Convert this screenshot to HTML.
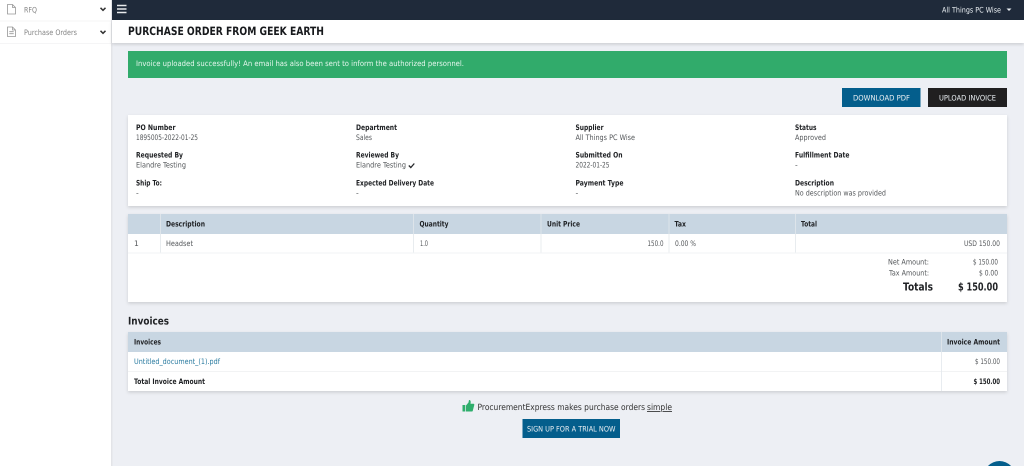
<!DOCTYPE html>
<html lang="en">
<head>
<meta charset="utf-8">
<title>Purchase Order from Geek Earth</title>
<style>
html,body{margin:0;padding:0;width:1024px;height:466px;overflow:hidden;background:#edeff4}
svg{display:block;filter:blur(.3px)}
text{font-family:"DejaVu Sans","Liberation Sans",sans-serif;font-size:7.6px;fill:#55585b;text-rendering:geometricPrecision}
.b{font-weight:700;fill:#202225}
.w{fill:#e9eef2}
</style>
</head>
<body>
<svg xmlns="http://www.w3.org/2000/svg" width="1024" height="466" viewBox="0 0 1024 466">
<defs>
<filter id="s" x="-2%" y="-10%" width="104%" height="125%"><feDropShadow dx="0" dy="1.5" stdDeviation="1.5" flood-color="#000" flood-opacity=".14"/></filter>
</defs>
<rect width="1024" height="466" fill="#edeff4"/>

<!-- Sidebar -->
<rect x="0" y="0" width="111" height="466" fill="#fff"/>
<rect x="111" y="0" width="1.500" height="466" fill="#e3e4e8"/>
<rect x="0" y="20.500" width="111" height="1" fill="#f5f5f6"/>
<rect x="0" y="43" width="111" height="1" fill="#f5f5f6"/>
<path d="M7.500 4.500h5l3 3v6.500h-8zM12.500 4.500v3h3" fill="none" stroke="#979797" stroke-width=".8"/>
<text x="24" y="12.300" textLength="13" lengthAdjust="spacingAndGlyphs" style="fill:#858585">RFQ</text>
<path d="M100.500 7.800l2.500 2.500 2.500-2.500" fill="none" stroke="#333" stroke-width="1.500"/>
<path d="M7.500 27h5l3 3v6.500h-8zM12.500 27v3h3M9.300 31.700h4.400M9.300 33.700h4.400" fill="none" stroke="#979797" stroke-width=".8"/>
<text x="24" y="35" textLength="53" lengthAdjust="spacingAndGlyphs" style="fill:#858585">Purchase Orders</text>
<path d="M100.500 30.800l2.500 2.500 2.500-2.500" fill="none" stroke="#333" stroke-width="1.500"/>

<!-- Top bar -->
<rect x="112" y="0" width="912" height="20" fill="#1f2a3a"/>
<path d="M117 5.500h9.500M117 9h9.500M117 12.500h9.500" stroke="#e8eaec" stroke-width="1.600"/>
<text class="w" x="942" y="12.300" textLength="59" lengthAdjust="spacingAndGlyphs">All Things PC Wise</text>
<path d="M1006.500 8.500h5l-2.500 2.500z" fill="#e9eef2"/>

<!-- Title bar -->
<rect x="112" y="20" width="912" height="23" fill="#fff" filter="url(#s)"/>
<text class="b" x="128" y="35" textLength="196" lengthAdjust="spacingAndGlyphs" style="font-size:11.500px;fill:#17191c">PURCHASE ORDER FROM GEEK EARTH</text>

<!-- Alert -->
<rect x="128" y="51" width="879" height="27" fill="#31ab6b"/>
<text x="136" y="66" textLength="328" lengthAdjust="spacingAndGlyphs" style="fill:#e6f6ee">Invoice uploaded successfully! An email has also been sent to inform the authorized personnel.</text>

<!-- Buttons -->
<rect x="842" y="88" width="78.500" height="19" fill="#045e8c"/>
<text class="w" x="853" y="100.300" textLength="57" lengthAdjust="spacingAndGlyphs">DOWNLOAD PDF</text>
<rect x="928" y="88" width="79" height="19" fill="#201f20"/>
<text class="w" x="939" y="100.300" textLength="57" lengthAdjust="spacingAndGlyphs">UPLOAD INVOICE</text>

<!-- Details card -->
<rect x="128" y="115" width="879" height="91" fill="#fff" filter="url(#s)"/>
<text class="b" x="136" y="130" textLength="39.500" lengthAdjust="spacingAndGlyphs">PO Number</text>
<text x="136" y="140" textLength="62" lengthAdjust="spacingAndGlyphs">1895005-2022-01-25</text>
<text class="b" x="136" y="157.700" textLength="47" lengthAdjust="spacingAndGlyphs">Requested By</text>
<text x="136" y="167.700" textLength="50" lengthAdjust="spacingAndGlyphs">Elandre Testing</text>
<text class="b" x="136" y="185.500" textLength="26" lengthAdjust="spacingAndGlyphs">Ship To:</text>
<text x="136" y="195.500">-</text>

<text class="b" x="356" y="130" textLength="41" lengthAdjust="spacingAndGlyphs">Department</text>
<text x="356" y="140" textLength="16" lengthAdjust="spacingAndGlyphs">Sales</text>
<text class="b" x="356" y="157.700" textLength="43" lengthAdjust="spacingAndGlyphs">Reviewed By</text>
<text x="356" y="167.700" textLength="50" lengthAdjust="spacingAndGlyphs">Elandre Testing</text>
<path d="M408.800 165.500l2 2 3.500-4" fill="none" stroke="#26282b" stroke-width="1.300"/>
<text class="b" x="356" y="185.500" textLength="78" lengthAdjust="spacingAndGlyphs">Expected Delivery Date</text>
<text x="356" y="195.500">-</text>

<text class="b" x="575.500" y="130" textLength="28" lengthAdjust="spacingAndGlyphs">Supplier</text>
<text x="575.500" y="140" textLength="59.500" lengthAdjust="spacingAndGlyphs">All Things PC Wise</text>
<text class="b" x="575.500" y="157.700" textLength="47" lengthAdjust="spacingAndGlyphs">Submitted On</text>
<text x="575.500" y="167.700" textLength="34" lengthAdjust="spacingAndGlyphs">2022-01-25</text>
<text class="b" x="575.500" y="185.500" textLength="48" lengthAdjust="spacingAndGlyphs">Payment Type</text>
<text x="575.500" y="195.500">-</text>

<text class="b" x="795" y="130" textLength="21.500" lengthAdjust="spacingAndGlyphs">Status</text>
<text x="795" y="140" textLength="31" lengthAdjust="spacingAndGlyphs">Approved</text>
<text class="b" x="795" y="157.700" textLength="54.500" lengthAdjust="spacingAndGlyphs">Fulfillment Date</text>
<text x="795" y="167.700">-</text>
<text class="b" x="795" y="185.500" textLength="39" lengthAdjust="spacingAndGlyphs">Description</text>
<text x="795" y="195.500" textLength="91" lengthAdjust="spacingAndGlyphs">No description was provided</text>

<!-- Line items card -->
<rect x="128" y="214" width="879" height="88" fill="#fff" filter="url(#s)"/>
<rect x="128" y="214" width="879" height="20" fill="#c8d6e2"/>
<path d="M160.500 214v39M413.500 214v39M541 214v39M669 214v39M795.500 214v39" stroke="#e3e8ec" stroke-width=".8"/>
<rect x="128" y="252.500" width="879" height="1" fill="#f2f3f4"/>
<text class="b" x="166" y="226.700" textLength="39" lengthAdjust="spacingAndGlyphs">Description</text>
<text class="b" x="419.500" y="226.700" textLength="29" lengthAdjust="spacingAndGlyphs">Quantity</text>
<text class="b" x="547" y="226.700" textLength="33" lengthAdjust="spacingAndGlyphs">Unit Price</text>
<text class="b" x="674.500" y="226.700" textLength="11.500" lengthAdjust="spacingAndGlyphs">Tax</text>
<text class="b" x="801" y="226.700" textLength="16" lengthAdjust="spacingAndGlyphs">Total</text>
<text x="134" y="246.200">1</text>
<text x="166" y="246.200" textLength="27" lengthAdjust="spacingAndGlyphs">Headset</text>
<text x="420" y="246.200" textLength="8" lengthAdjust="spacingAndGlyphs">1.0</text>
<text x="647.500" y="246.200" textLength="16" lengthAdjust="spacingAndGlyphs">150.0</text>
<text x="675" y="246.200" textLength="21" lengthAdjust="spacingAndGlyphs">0.00 %</text>
<text x="964" y="246.200" textLength="36" lengthAdjust="spacingAndGlyphs">USD 150.00</text>
<text x="888" y="264.700" textLength="41" lengthAdjust="spacingAndGlyphs">Net Amount:</text>
<text x="973" y="264.700" textLength="25" lengthAdjust="spacingAndGlyphs">$ 150.00</text>
<text x="889" y="275.500" textLength="40" lengthAdjust="spacingAndGlyphs">Tax Amount:</text>
<text x="979" y="275.500" textLength="19" lengthAdjust="spacingAndGlyphs">$ 0.00</text>
<text class="b" x="903" y="290.500" textLength="30" lengthAdjust="spacingAndGlyphs" style="font-size:11px">Totals</text>
<text class="b" x="958" y="290.500" textLength="40" lengthAdjust="spacingAndGlyphs" style="font-size:11px">$ 150.00</text>

<!-- Invoices -->
<text class="b" x="128" y="324.500" textLength="41" lengthAdjust="spacingAndGlyphs" style="font-size:10.500px">Invoices</text>
<rect x="128" y="332" width="879" height="59" fill="#fff" filter="url(#s)"/>
<rect x="128" y="332" width="879" height="20" fill="#c8d6e2"/>
<rect x="128" y="371" width="879" height="1" fill="#f2f3f4"/>
<path d="M941.500 332v59" stroke="#e3e8ec" stroke-width=".8"/>
<text class="b" x="134" y="344.700" textLength="27" lengthAdjust="spacingAndGlyphs">Invoices</text>
<text class="b" x="947" y="344.700" textLength="53" lengthAdjust="spacingAndGlyphs">Invoice Amount</text>
<text x="134" y="364.200" textLength="86" lengthAdjust="spacingAndGlyphs" style="fill:#2a7ba0">Untitled_document_(1).pdf</text>
<text x="975" y="364.200" textLength="25" lengthAdjust="spacingAndGlyphs">$ 150.00</text>
<text class="b" x="134" y="384.200" textLength="71" lengthAdjust="spacingAndGlyphs">Total Invoice Amount</text>
<text class="b" x="973.500" y="384.200" textLength="26.500" lengthAdjust="spacingAndGlyphs">$ 150.00</text>

<!-- Footer -->
<rect x="462.500" y="405" width="2.800" height="6.500" fill="#2fae6c"/>
<path d="M466 405.500l2.500-3 .5-2.500c1.500 0 2 1.200 1.500 3.800h3c.8 0 1 .8.7 1.500l-1.400 5.400c-.2.500-.5.800-1 .8h-5.800z" fill="#2fae6c"/>
<text x="477.500" y="410" textLength="167.500" lengthAdjust="spacingAndGlyphs" style="font-size:8.600px;fill:#333">ProcurementExpress makes purchase orders</text>
<text x="647" y="410" textLength="25" lengthAdjust="spacingAndGlyphs" text-decoration="underline" style="font-size:8.600px;fill:#333">simple</text>
<rect x="522.500" y="419" width="97.500" height="19" fill="#045e8c"/>
<text class="w" x="527" y="431.500" textLength="88.500" lengthAdjust="spacingAndGlyphs">SIGN UP FOR A TRIAL NOW</text>
<path d="M987.900 466A16 16 0 0 1 1011.100 466z" fill="#045e8c"/>
</svg>
</body>
</html>
